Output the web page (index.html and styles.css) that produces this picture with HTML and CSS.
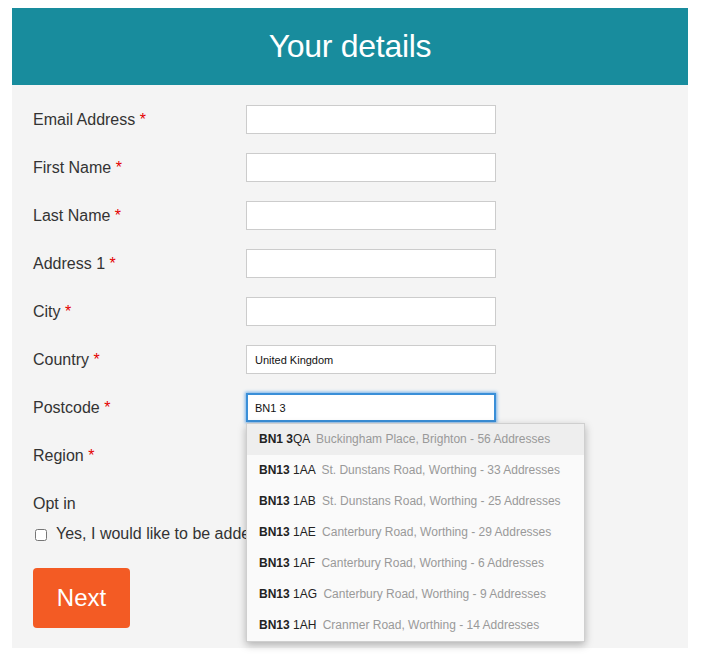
FILE: index.html
```html
<!DOCTYPE html>
<html lang="en">
<head>
    <meta charset="UTF-8">
    <meta name="viewport" content="width=device-width, initial-scale=1.0">
    <title>Your details</title>
    <link rel="stylesheet" href="styles.css">
</head>
<body>
    <div class="page">
        <!-- Header -->
        <div class="header">
            <h1>Your details</h1>
        </div>

        <!-- Form -->
        <form class="details">
            <div class="row">
                <label>Email Address <span class="req">*</span></label>
                <input type="text" class="field">
            </div>
            <div class="row">
                <label>First Name <span class="req">*</span></label>
                <input type="text" class="field">
            </div>
            <div class="row">
                <label>Last Name <span class="req">*</span></label>
                <input type="text" class="field">
            </div>
            <div class="row">
                <label>Address 1 <span class="req">*</span></label>
                <input type="text" class="field">
            </div>
            <div class="row">
                <label>City <span class="req">*</span></label>
                <input type="text" class="field">
            </div>
            <div class="row">
                <label>Country <span class="req">*</span></label>
                <input type="text" class="field" value="United Kingdom">
            </div>
            <div class="row">
                <label>Postcode <span class="req">*</span></label>
                <div class="lookup">
                    <input type="text" class="field focused" value="BN1 3">
                    <ul class="suggestions">
                        <li class="active"><b>BN1 3</b>QA <span class="addr">Buckingham Place, Brighton - 56 Addresses</span></li>
                        <li><b>BN13</b> 1AA <span class="addr">St. Dunstans Road, Worthing - 33 Addresses</span></li>
                        <li><b>BN13</b> 1AB <span class="addr">St. Dunstans Road, Worthing - 25 Addresses</span></li>
                        <li><b>BN13</b> 1AE <span class="addr">Canterbury Road, Worthing - 29 Addresses</span></li>
                        <li><b>BN13</b> 1AF <span class="addr">Canterbury Road, Worthing - 6 Addresses</span></li>
                        <li><b>BN13</b> 1AG <span class="addr">Canterbury Road, Worthing - 9 Addresses</span></li>
                        <li><b>BN13</b> 1AH <span class="addr">Cranmer Road, Worthing - 14 Addresses</span></li>
                    </ul>
                </div>
            </div>
            <div class="row">
                <label>Region <span class="req">*</span></label>
                <input type="text" class="field">
            </div>
            <div class="row">
                <label>Opt in</label>
            </div>
            <label class="optin">
                <input type="checkbox">
                <span class="optin-text">Yes, I would like to be added to the mailing list</span>
            </label>
            <button type="button" class="btn">Next</button>
        </form>
    </div>
</body>
</html>
```

FILE: styles.css
```css
/* General Reset */
* {
    margin: 0;
    padding: 0;
    box-sizing: border-box;
}

body {
    font-family: "Liberation Sans", Arial, sans-serif;
    background-color: #ffffff;
    color: #333333;
    padding: 8px 16px 9px 12px;
}

/* Header */
.header {
    background-color: #188c9d;
    height: 77px;
    display: flex;
    justify-content: center;
    align-items: center;
}

.header h1 {
    color: #ffffff;
    font-size: 32px;
    font-weight: normal;
    letter-spacing: -0.3px;
}

/* Form panel */
.details {
    background-color: #f4f4f4;
    padding: 20px 21px 20px 21px;
    display: flex;
    flex-direction: column;
    gap: 19px;
}

.row {
    display: grid;
    grid-template-columns: 213px 250px;
    align-items: center;
    height: 29px;
    font-size: 16px;
}

.req {
    color: #e40000;
}

.field {
    width: 250px;
    height: 29px;
    border: 1px solid #cccccc;
    background-color: #ffffff;
    padding: 0 8px;
    font-family: "Liberation Sans", Arial, sans-serif;
    font-size: 11px;
    color: #111111;
    outline: none;
}

.field.focused {
    border: 2px solid #3a8fd8;
    box-shadow: 0 0 3px 1px rgba(88, 160, 230, 0.8);
    padding: 0 7px;
}

/* Postcode lookup */
.lookup {
    position: relative;
}

.suggestions {
    position: absolute;
    top: 30px;
    left: 0;
    width: 339px;
    list-style: none;
    background-color: #fafafa;
    border: 1px solid #cfcfcf;
    box-shadow: 0 3px 8px rgba(0, 0, 0, 0.28);
    z-index: 2;
}

.suggestions li {
    height: 31px;
    line-height: 31px;
    padding-left: 12px;
    font-size: 12px;
    color: #222222;
    white-space: nowrap;
}

.suggestions li.active {
    background-color: #eeeeee;
}

.addr {
    color: #999999;
    margin-left: 3px;
}

/* Opt in - text runs under the open dropdown */
.optin {
    display: flex;
    align-items: center;
    gap: 9px;
    font-size: 16px;
    white-space: nowrap;
    margin-top: -13px;
    height: 20px;
    padding-left: 2px;
    width: 213px;
    overflow: hidden;
}

.optin input {
    flex: none;
    width: 12px;
    height: 12px;
    margin-top: 2px;
}

.btn {
    align-self: flex-start;
    width: 97px;
    height: 60px;
    margin-top: 5px;
    border: none;
    border-radius: 4px;
    background-color: #f35b24;
    color: #ffffff;
    font-family: "Liberation Sans", Arial, sans-serif;
    font-size: 24px;
}
```
